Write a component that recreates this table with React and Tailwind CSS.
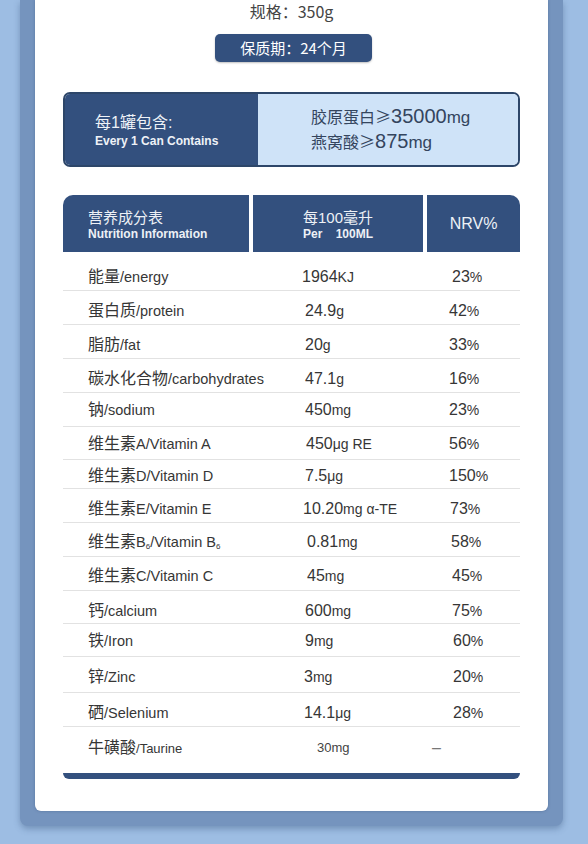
const font = { fontFamily: '"Liberation Sans", "Noto Sans CJK SC", sans-serif' };
const cjk = { fontFamily: '"Noto Sans CJK SC", sans-serif' };

const E = ({ children }) => <span className="text-[14.5px]">{children}</span>;
const U = ({ children }) => <span className="text-[14px]">{children}</span>;

const rows = [
  { h: "h-[39px]", pt: "pt-[15px]", name: <>能量<E>/energy</E></>, v: "pl-0", value: <>1964<U>KJ</U></>, n: "pl-[3px]", nrv: <>23<U>%</U></> },
  { h: "h-[34px]", pt: "pt-[10px]", name: <>蛋白质<E>/protein</E></>, v: "pl-[3px]", value: <>24.9<U>g</U></>, n: "pl-0", nrv: <>42<U>%</U></> },
  { h: "h-[34px]", pt: "pt-[10px]", name: <>脂肪<E>/fat</E></>, v: "pl-[3px]", value: <>20<U>g</U></>, n: "pl-0", nrv: <>33<U>%</U></> },
  { h: "h-[34px]", pt: "pt-[10px]", name: <>碳水化合物<E>/carbohydrates</E></>, v: "pl-[3px]", value: <>47.1<U>g</U></>, n: "pl-0", nrv: <>16<U>%</U></> },
  { h: "h-[34px]", pt: "pt-[7px]", name: <>钠<E>/sodium</E></>, v: "pl-[3px]", value: <>450<U>mg</U></>, n: "pl-0", nrv: <>23<U>%</U></> },
  { h: "h-[33px]", pt: "pt-[7px]", name: <>维生素<E>A/Vitamin A</E></>, v: "pl-[4px]", value: <>450<U>μg RE</U></>, n: "pl-0", nrv: <>56<U>%</U></> },
  { h: "h-[29px]", pt: "pt-[6px]", name: <>维生素<E>D/Vitamin D</E></>, v: "pl-[3px]", value: <>7.5<U>μg</U></>, n: "pl-0", nrv: <>150<U>%</U></> },
  { h: "h-[34px]", pt: "pt-[10px]", name: <>维生素<E>E/Vitamin E</E></>, v: "pl-[1px]", value: <>10.20<U>mg α-TE</U></>, n: "pl-[1px]", nrv: <>73<U>%</U></> },
  {
    h: "h-[34px]",
    pt: "pt-[9px]",
    name: <>维生素<E>B<sub className="text-[8px]">6</sub>/Vitamin B<sub className="text-[8px]">6</sub></E></>,
    v: "pl-[5px]",
    value: <>0.81<U>mg</U></>,
    n: "pl-[2px]",
    nrv: <>58<U>%</U></>,
  },
  { h: "h-[34px]", pt: "pt-[9px]", name: <>维生素<E>C/Vitamin C</E></>, v: "pl-[5px]", value: <>45<U>mg</U></>, n: "pl-[3px]", nrv: <>45<U>%</U></> },
  { h: "h-[33px]", pt: "pt-[10px]", name: <>钙<E>/calcium</E></>, v: "pl-[3px]", value: <>600<U>mg</U></>, n: "pl-[3px]", nrv: <>75<U>%</U></> },
  { h: "h-[33px]", pt: "pt-[7px]", name: <>铁<E>/Iron</E></>, v: "pl-[3px]", value: <>9<U>mg</U></>, n: "pl-[4px]", nrv: <>60<U>%</U></> },
  { h: "h-[36px]", pt: "pt-[10px]", name: <>锌<E>/Zinc</E></>, v: "pl-[2px]", value: <>3<U>mg</U></>, n: "pl-[4px]", nrv: <>20<U>%</U></> },
  { h: "h-[34px]", pt: "pt-[10px]", name: <>硒<E>/Selenium</E></>, v: "pl-[2px]", value: <>14.1<U>μg</U></>, n: "pl-[4px]", nrv: <>28<U>%</U></> },
];

const App = () => {
  return (
    <div style={font} className="min-h-[844px] w-[588px] bg-[#9dbde3] pl-[20px] pr-[25px] pb-[19px]">
      <div className="bg-[#7594be] px-[15px] pb-[15px] rounded-b-[8px] shadow-[0_3px_6px_rgba(40,70,110,0.35)]">
        <div className="bg-white rounded-b-[6px] pb-[32px] pt-[1px] shadow-[0_0_3px_rgba(40,60,100,0.35)] flex flex-col items-center">
          <p className="leading-[20px] text-[16px] text-[#444]" style={cjk}>
            规格：350g
          </p>

          <div
            className="mt-[13px] ml-[4px] w-[157px] h-[28px] rounded-[5px] bg-[#33507e] text-white text-[15px] flex justify-center items-center shadow-[0_1px_2px_rgba(0,0,0,0.25)]"
            style={cjk}
          >
            保质期：24个月
          </div>

          <div className="mt-[30px] w-[457px] h-[75px] flex rounded-[7px] overflow-hidden border-2 border-[#2d4669]">
            <div className="w-[193px] bg-[#33507e] text-[#eef2f7] pl-[30px] flex flex-col justify-center pt-[2px]">
              <span className="text-[16px] leading-[20px]">每1罐包含:</span>
              <span className="text-[12px] font-bold leading-[16px]">Every 1 Can Contains</span>
            </div>
            <div className="flex-1 bg-[#cfe3f8] text-[#34455e] pl-[53px] flex flex-col justify-center pb-[2px]">
              <span className="text-[16px] leading-[24px]">
                胶原蛋白<span style={cjk}>≥</span><span className="text-[20px]">35000</span><span className="text-[17px]">mg</span>
              </span>
              <span className="text-[16px] leading-[22px]">
                燕窝酸<span style={cjk}>≥</span><span className="text-[20px]">875</span><span className="text-[17px]">mg</span>
              </span>
            </div>
          </div>

          <div className="mt-[28px] w-[457px]">
            <div className="flex gap-[4px] h-[57px] text-[#edf1f6]">
              <div className="w-[186px] bg-[#33507e] rounded-tl-[10px] pl-[25px] flex flex-col justify-center pt-[2px]">
                <span className="text-[15px] leading-[19px]">营养成分表</span>
                <span className="text-[12px] font-bold leading-[15px]">Nutrition Information</span>
              </div>
              <div className="w-[170px] bg-[#33507e] flex flex-col items-center justify-center pt-[2px]">
                <span className="text-[15px] leading-[19px]">每100毫升</span>
                <span className="text-[12px] font-bold leading-[15px] whitespace-pre">Per    100ML</span>
              </div>
              <div className="flex-1 bg-[#33507e] rounded-tr-[10px] flex items-center justify-center pt-[1px]">
                <span className="text-[16px]">NRV%</span>
              </div>
            </div>

            {rows.map((r, i) => (
              <div key={i} className={`flex items-start border-b border-[#e2e2e2] text-[#363636] leading-[20px] ${r.h} ${r.pt}`}>
                <div className="w-[239px] pl-[25px] text-[16px] whitespace-nowrap">{r.name}</div>
                <div className={`w-[147px] text-[16px] whitespace-nowrap ${r.v}`}>{r.value}</div>
                <div className={`text-[16px] ${r.n}`}>{r.nrv}</div>
              </div>
            ))}

            <div className="flex items-start h-[46px] pt-[11px] text-[#363636] leading-[20px]">
              <div className="w-[239px] pl-[25px] text-[16px] whitespace-nowrap">
                牛磺酸<span className="text-[13px]">/Taurine</span>
              </div>
              <div className="w-[147px] pl-[15px] text-[13px] text-[#444]">30mg</div>
              <div className="-ml-[17px] text-[16px] text-[#777]">–</div>
            </div>

            <div className="h-[6px] bg-[#33507e] rounded-b-[6px]" />
          </div>
        </div>
      </div>
    </div>
  );
};

export default App;
